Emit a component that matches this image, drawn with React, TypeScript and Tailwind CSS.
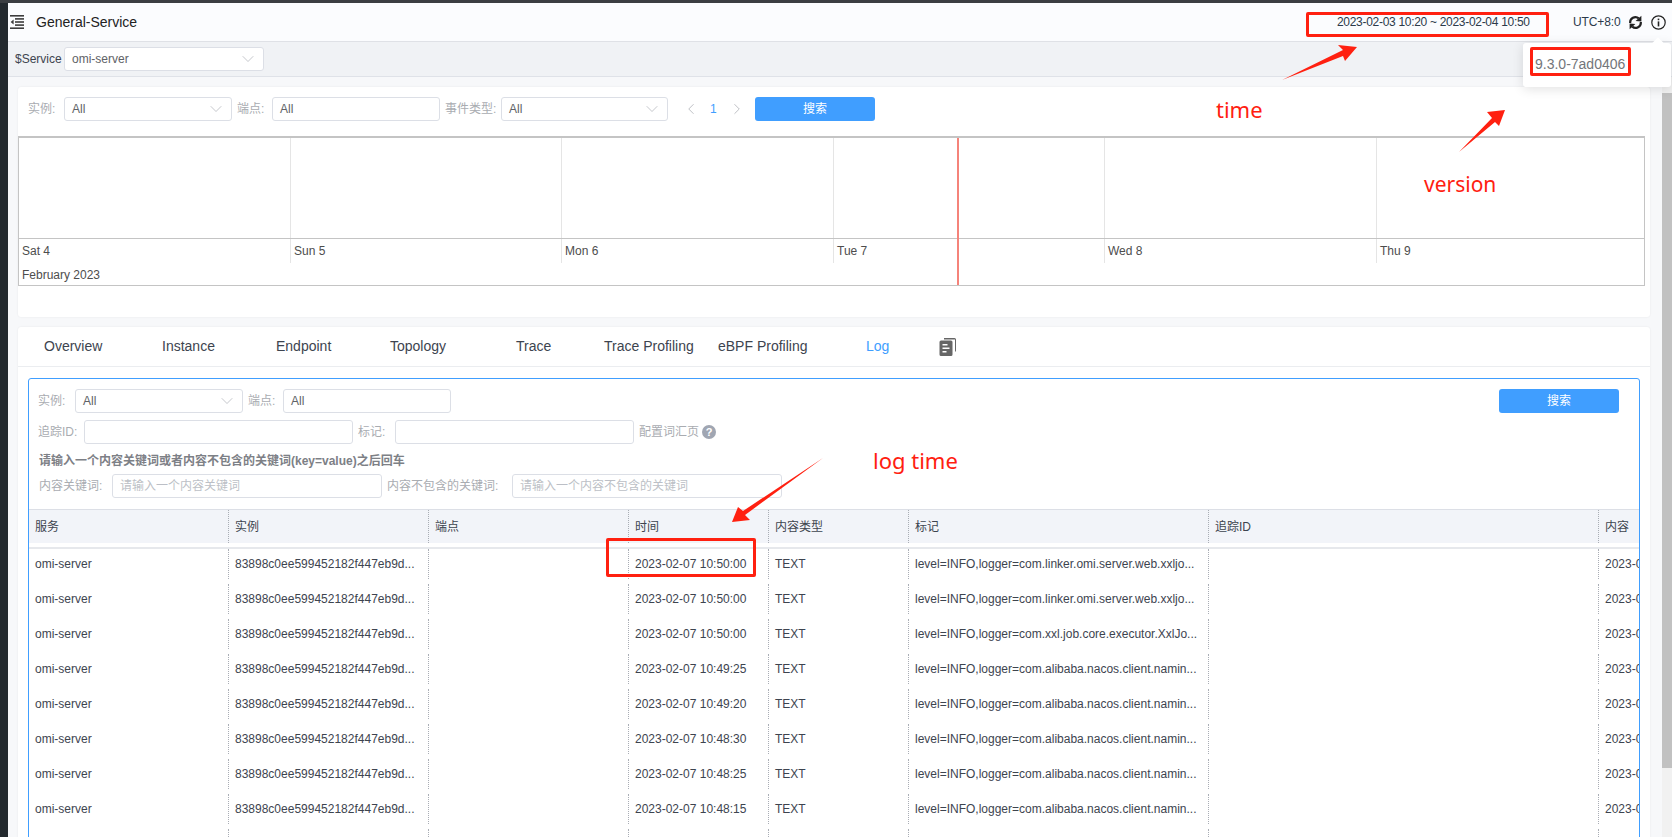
import { ChevronDown, ChevronLeft, ChevronRight } from "lucide-react";

const FONT = "font-['Liberation_Sans','Noto_Sans_CJK_SC',sans-serif]";

const ROWS = [
  ["2023-02-07 10:50:00", "level=INFO,logger=com.linker.omi.server.web.xxljo..."],
  ["2023-02-07 10:50:00", "level=INFO,logger=com.linker.omi.server.web.xxljo..."],
  ["2023-02-07 10:50:00", "level=INFO,logger=com.xxl.job.core.executor.XxlJo..."],
  ["2023-02-07 10:49:25", "level=INFO,logger=com.alibaba.nacos.client.namin..."],
  ["2023-02-07 10:49:20", "level=INFO,logger=com.alibaba.nacos.client.namin..."],
  ["2023-02-07 10:48:30", "level=INFO,logger=com.alibaba.nacos.client.namin..."],
  ["2023-02-07 10:48:25", "level=INFO,logger=com.alibaba.nacos.client.namin..."],
  ["2023-02-07 10:48:15", "level=INFO,logger=com.alibaba.nacos.client.namin..."],
  ["2023-02-07 10:48:10", "level=INFO,logger=com.alibaba.nacos.client.namin..."],
];

const COLS = "grid grid-cols-[199px_200px_200px_140px_140px_300px_390px_200px]";
const DAYS = ["Sat 4", "Sun 5", "Mon 6", "Tue 7", "Wed 8", "Thu 9"];
const TL_COLS = "grid grid-cols-[271px_271px_272px_271px_272px_1fr]";
const TABS = [
  ["Overview", "w-[118px]"],
  ["Instance", "w-[114px]"],
  ["Endpoint", "w-[114px]"],
  ["Topology", "w-[126px]"],
  ["Trace", "w-[88px]"],
  ["Trace Profiling", "w-[114px]"],
  ["eBPF Profiling", "w-[148px]"],
];

function Select({ value, className }: { value: string; className: string }) {
  return (
    <div className={`flex h-[24px] items-center justify-between rounded-[3px] border border-[#dcdfe6] bg-white pl-[7px] pr-[5px] text-[12px] text-[#606266] ${className}`}>
      <span>{value}</span>
      <ChevronDown size={20} strokeWidth={0.8} className="text-[#a8abb2]" />
    </div>
  );
}

function Field({ value, placeholder, className }: { value?: string; placeholder?: string; className: string }) {
  return (
    <div className={`flex h-[24px] items-center rounded-[3px] border border-[#dcdfe6] bg-white pl-[7px] text-[12px] ${value ? "text-[#606266]" : "text-[#bcbfc6]"} ${className}`}>
      {value ?? placeholder}
    </div>
  );
}

function Label({ text, className }: { text: string; className: string }) {
  return <span className={`shrink-0 whitespace-nowrap text-[12px] text-[#a9acb1] ${className}`}>{text}</span>;
}

function Button({ className }: { className: string }) {
  return (
    <div className={`flex h-[24px] items-center justify-center rounded-[3px] bg-[#409eff] text-[12px] text-white ${className}`}>
      搜索
    </div>
  );
}

function Arrow({ points }: { points: string }) {
  return <polygon points={points} fill="#ff2010" />;
}

export default function App() {
  return (
    <div className={`relative h-[837px] w-[1672px] overflow-hidden bg-[#23292e] ${FONT}`}>
      <div className="h-[3px] bg-[#3b3e42]" />
      <div className="ml-[8px] flex h-[834px] flex-col bg-[#f7f8fa]">
        {/* header */}
        <div className="flex h-[39px] shrink-0 items-center border-b border-[#dfe1e6] bg-[#fbfcfe]">
          <svg width="14" height="14" viewBox="0 0 14 14" className="ml-[2px]" fill="#3d3d3d">
            <rect x="0" y="0" width="14" height="1.6" />
            <rect x="5" y="3.1" width="9" height="1.6" />
            <rect x="5" y="6.2" width="9" height="1.6" />
            <rect x="5" y="9.3" width="9" height="1.6" />
            <rect x="0" y="12.4" width="14" height="1.6" />
            <polygon points="3.6,4.4 3.6,9.6 0.6,7" />
          </svg>
          <span className="ml-[12px] w-[101px] whitespace-nowrap text-[14px] text-[#222]">General-Service</span>
          <span className="ml-[1200px] w-[194px] whitespace-nowrap text-[12px] tracking-[-0.3px] text-[#2c3a4a]">2023-02-03 10:20 ~ 2023-02-04 10:50</span>
          <span className="ml-[42px] w-[48px] whitespace-nowrap text-[12px] tracking-[-0.1px] text-[#2c3a4a]">UTC+8:0</span>
          <svg width="15" height="15" viewBox="0 0 15 15" className="ml-[7px]" fill="#222">
            <path d="M2.2 8A5.3 5.3 0 0 1 10.8 3.3" fill="none" stroke="#222" strokeWidth="2.2" />
            <polygon points="13.4,0.8 13.4,6.6 7.6,6" />
            <path d="M12.8 7A5.3 5.3 0 0 1 4.2 11.7" fill="none" stroke="#222" strokeWidth="2.2" />
            <polygon points="1.6,14.2 1.6,8.4 7.4,9" />
          </svg>
          <svg width="15" height="15" viewBox="0 0 15 15" className="ml-[8px]" fill="#222">
            <circle cx="7.5" cy="7.5" r="6.7" fill="none" stroke="#222" strokeWidth="1.2" />
            <rect x="6.7" y="6.4" width="1.6" height="5" />
            <rect x="6.7" y="3.6" width="1.6" height="1.6" />
          </svg>
        </div>

        {/* service bar */}
        <div className="flex h-[35px] shrink-0 items-center border-b border-[#dfe2e8] bg-[#f0f2f5] pl-[7px]">
          <span className="w-[49px] text-[12px] text-[#3d444f]">$Service</span>
          <Select value="omi-server" className="w-[200px]" />
        </div>

        <div className="flex min-h-0 flex-1">
          <div className="min-w-0 flex-1 pl-[10px] pr-[12px] pt-[10px]">
            {/* event timeline card */}
            <div className="h-[230px] rounded-[3px] bg-white pt-[10px] shadow-[0_0_2px_rgba(0,0,0,0.08)]">
              <div className="flex h-[24px] items-center pl-[10px]">
                <Label text="实例:" className="w-[36px]" />
                <Select value="All" className="w-[168px]" />
                <Label text="端点:" className="ml-[5px] w-[35px]" />
                <Field value="All" className="w-[168px]" />
                <Label text="事件类型:" className="ml-[5px] w-[56px]" />
                <Select value="All" className="w-[167px]" />
                <ChevronLeft size={18} strokeWidth={1} className="ml-[14px] text-[#a8abb2]" />
                <span className="ml-[10px] w-[7px] text-[12px] text-[#409eff]">1</span>
                <ChevronRight size={18} strokeWidth={1} className="ml-[11px] text-[#a8abb2]" />
                <Button className="ml-[9px] w-[120px]" />
              </div>
              <div className="relative mt-[15px] mr-[5px] border border-[#c4c4c4] border-t-2 text-[12px] text-[#4d4d4d]">
                <div className={`h-[100px] ${TL_COLS}`}>
                  {DAYS.map((d, i) => (
                    <div key={d} className={i > 0 ? "border-l border-[#e5e5e5]" : ""} />
                  ))}
                </div>
                <div className={`h-[25px] border-t border-[#c4c4c4] ${TL_COLS}`}>
                  {DAYS.map((d, i) => (
                    <div key={d} className={`pl-[3px] pt-[5px] leading-[14px] ${i > 0 ? "border-l border-[#e5e5e5]" : ""}`}>
                      {d}
                    </div>
                  ))}
                </div>
                <div className="h-[22px] pl-[3px] pt-[5px] leading-[14px]">February 2023</div>
                <div className="absolute bottom-0 left-[938px] top-0 w-[2px] bg-[#f5837a]" />
              </div>
            </div>

            {/* log card */}
            <div className="mt-[10px] h-[600px] rounded-[3px] bg-white pl-[10px] pr-[10px] shadow-[0_0_2px_rgba(0,0,0,0.08)]">
              <div className="-mx-[10px] flex h-[40px] items-center border-b border-[#ebedf0] pl-[26px] text-[14px] text-[#3d444f]">
                {TABS.map(([t, w]) => (
                  <span key={t} className={`whitespace-nowrap ${w}`}>{t}</span>
                ))}
                <span className="w-[73px] text-[#409eff]">Log</span>
                <svg width="17" height="18" viewBox="0 0 17 18" fill="#666">
                  <path d="M5 0h10.5a1.5 1.5 0 0 1 1.5 1.5v11a1.5 1.5 0 0 1-1 1.4V1.5h-11z" />
                  <path d="M2 2.5h10a1.5 1.5 0 0 1 1.5 1.5v12.5A1.5 1.5 0 0 1 12 18H2a1.5 1.5 0 0 1-1.5-1.5V4A1.5 1.5 0 0 1 2 2.5z" />
                  <rect x="3.5" y="6" width="5" height="1.5" fill="#fff" />
                  <rect x="3.5" y="9.5" width="7" height="1.5" fill="#fff" />
                  <rect x="3.5" y="13" width="4" height="1.5" fill="#fff" />
                </svg>
              </div>

              <div className="mt-[11px] h-[480px] overflow-hidden rounded-[3px] border border-[#409eff]">
                <div className="flex items-center pl-[9px] pt-[10px]">
                  <Label text="实例:" className="w-[37px]" />
                  <Select value="All" className="w-[168px]" />
                  <Label text="端点:" className="ml-[5px] w-[35px]" />
                  <Field value="All" className="w-[168px]" />
                  <Button className="ml-auto mr-[20px] w-[120px]" />
                </div>
                <div className="mt-[7px] flex items-center pl-[9px]">
                  <Label text="追踪ID:" className="w-[46px]" />
                  <Field className="w-[269px]" />
                  <Label text="标记:" className="ml-[5px] w-[37px]" />
                  <Field className="w-[239px]" />
                  <Label text="配置词汇页" className="ml-[5px] w-[63px]" />
                  <div className="flex h-[14px] w-[14px] items-center justify-center rounded-full bg-[#a0a6b2] text-[11px] font-bold text-white">?</div>
                </div>
                <div className="mt-[9px] h-[16px] pl-[10px] text-[12px] font-bold leading-[16px] text-[#7d8086]">
                  请输入一个内容关键词或者内容不包含的关键词(key=value)之后回车
                </div>
                <div className="mt-[5px] flex items-center pl-[10px]">
                  <Label text="内容关键词:" className="w-[73px]" />
                  <Field placeholder="请输入一个内容关键词" className="w-[270px]" />
                  <Label text="内容不包含的关键词:" className="ml-[5px] w-[125px]" />
                  <Field placeholder="请输入一个内容不包含的关键词" className="w-[270px]" />
                </div>

                {/* log table */}
                <div className={`mt-[11px] h-[34px] border-t border-[#dcdfe6] bg-[#f2f4f9] text-[12px] text-[#3d444f] ${COLS}`}>
                  {["服务", "实例", "端点", "时间", "内容类型", "标记", "追踪ID", "内容"].map((h, i) => (
                    <div key={h} className={`flex items-center pl-[6px] ${i > 0 ? "border-l border-dotted border-[#a9adb5]" : ""}`}>{h}</div>
                  ))}
                </div>
                <div className="mt-[4px] border-t-2 border-[#e6e8ec] text-[12px] text-[#3d444f]">
                  {ROWS.map(([time, tag], r) => (
                    <div key={r} className={`mb-[5px] h-[30px] ${COLS}`}>
                      {["omi-server", "83898c0ee599452182f447eb9d...", "", time, "TEXT", tag, "", time].map((c, i) => (
                        <div key={i} className={`flex items-center overflow-hidden whitespace-nowrap pl-[6px] ${i > 0 ? "border-l border-dotted border-[#a9adb5]" : ""}`}>{c}</div>
                      ))}
                    </div>
                  ))}
                </div>
              </div>
            </div>
          </div>

          {/* scrollbar */}
          <div className="w-[10px] shrink-0 bg-[#f1f1f1]">
            <div className="mt-[16px] h-[675px] bg-[#c1c1c1]" />
          </div>
        </div>
      </div>

      {/* version popover */}
      <div className="absolute left-[1523px] top-[43px] h-[44px] w-[148px] rounded-[3px] bg-white pl-[12px] pt-[13px] text-[14px] leading-[16px] text-[#73767a] shadow-[0_2px_12px_rgba(0,0,0,0.12)]">
        9.3.0-7ad0406
        <div className="absolute left-[131px] top-[-4px] h-[8px] w-[8px] rotate-45 bg-white" />
      </div>

      {/* red annotations */}
      <div className="absolute left-[1306px] top-[12px] h-[25px] w-[243px] rounded-[2px] border-[3px] border-[#ff2010]" />
      <div className="absolute left-[1530px] top-[47px] h-[29px] w-[101px] rounded-[2px] border-[3px] border-[#ff2010]" />
      <div className="absolute left-[606px] top-[538px] h-[39px] w-[150px] rounded-[2px] border-[3px] border-[#ff2010]" />
      <svg width="1672" height="837" className="pointer-events-none absolute left-0 top-0">
        <Arrow points="1282,80 1343,50 1338,45 1357,47 1345,61 1343,56" />
        <Arrow points="1459,152 1492,118 1487,112 1505,110 1499,126 1495,122" />
        <Arrow points="823,458 745,515 750,520 732,522 738,507 743,511" />
      </svg>
      <span className="absolute left-[1216px] top-[95px] font-['Noto_Sans',sans-serif] text-[22px] leading-[28px] text-[#ff2010]">time</span>
      <span className="absolute left-[1424px] top-[170px] font-['Noto_Sans',sans-serif] text-[21px] leading-[28px] text-[#ff2010]">version</span>
      <span className="absolute left-[873px] top-[446px] font-['Noto_Sans',sans-serif] text-[22px] leading-[28px] text-[#ff2010]">log time</span>
    </div>
  );
}
